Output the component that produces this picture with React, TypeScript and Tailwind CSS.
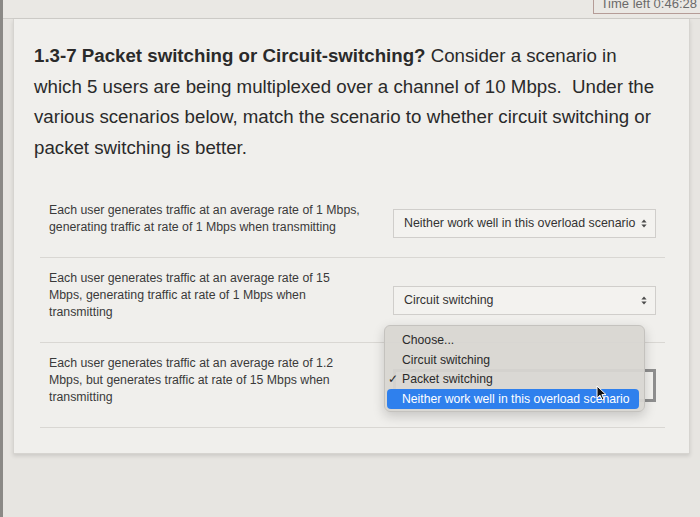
import React from 'react';

const rows = [
  {
    text: 'Each user generates traffic at an average rate of 1 Mbps, generating traffic at rate of 1 Mbps when transmitting',
    value: 'Neither work well in this overload scenario',
  },
  {
    text: 'Each user generates traffic at an average rate of 15 Mbps, generating traffic at rate of 1 Mbps when transmitting',
    value: 'Circuit switching',
  },
  {
    text: 'Each user generates traffic at an average rate of 1.2 Mbps, but generates traffic at rate of 15 Mbps when transmitting',
    value: '',
    open: true,
  },
];

const options = ['Choose...', 'Circuit switching', 'Packet switching', 'Neither work well in this overload scenario'];

const UpDown = () => (
  <svg width="6" height="9" viewBox="0 0 6 9" className="shrink-0">
    <path d="M3 0.5 L5.6 3.6 H0.4 Z" fill="#4a4a4a" />
    <path d="M3 8.5 L5.6 5.4 H0.4 Z" fill="#4a4a4a" />
  </svg>
);

const Cursor = () => (
  <svg width="11" height="16" viewBox="0 0 11 16" className="absolute left-[211px] top-[59px]">
    <path d="M1 1 L1 13 L4 10.2 L6.2 15 L8 14.2 L5.9 9.6 L10 9.6 Z" fill="#111" stroke="#fff" strokeWidth="1" strokeLinejoin="round" />
  </svg>
);

const Dropdown = () => (
  <div className="absolute left-[-12px] top-[-47px] w-[261px] rounded-[6px] border border-[#c4c2be] bg-[#d8d6d2]/95 pt-[5px] pb-[2px] shadow-[0_4px_12px_rgba(0,0,0,0.18)] z-10">
    {options.map((o, i) => {
      const hi = i === 3;
      return (
        <div
          key={o}
          className={
            hi
              ? 'relative mx-[2px] mr-[5px] h-[19.5px] rounded-[4px] bg-[#2f80ed] pl-[15px] flex items-center text-[12.2px] text-white'
              : 'relative mx-[2px] h-[19.5px] pl-[15px] flex items-center text-[12.2px] text-[#2a2a2a]'
          }
        >
          {i === 2 && <span className="absolute left-[1px] text-[12px]">✓</span>}
          {o}
        </div>
      );
    })}
    <Cursor />
  </div>
);

const App = () => {
  return (
    <div className="relative w-[700px] h-[517px] overflow-hidden bg-[#e7e5e1] border-l-[3px] border-[#8b8986] font-['Liberation_Sans',Arial,sans-serif]">
      <div className="h-[19px] bg-[#eae8e4] border-b border-[#cfcdc9] flex justify-end">
        <div className="mt-[-7px] mr-[-8px] h-[21px] border border-[#b59c97] pl-[7px] pr-[10px] text-[13px] leading-[19px] text-[#6a6a6a] whitespace-nowrap">
          Time left 0:46:28
        </div>
      </div>

      <div className="ml-[10px] mr-[10px] bg-[#f0efec] border-x border-b border-[#d6d4d0] shadow-[0_2px_4px_rgba(0,0,0,0.12)] pt-[22px] pl-[20px] pr-[20px] pb-[25px]">
        <p className="w-[630px] text-[18.7px] leading-[30.5px] text-[#2a2a2a]">
          <span className="font-bold">1.3-7 Packet switching or Circuit-switching?</span> Consider a scenario in which 5 users are being multiplexed over a channel of 10 Mbps.&nbsp; Under the various scenarios below, match the scenario to whether circuit switching or packet switching is better.
        </p>

        <div className="mt-[27px] ml-[6px] mr-[4px]">
          {rows.map((r, i) => (
            <div key={i} className="flex justify-between border-b border-[#d9d7d3] px-[9px]">
              <div className="w-[314px] pt-[12px] pb-[21px] text-[12.3px] leading-[17px] text-[#3a3a3a]">{r.text}</div>
              {r.open ? (
                <div className="relative self-center w-[263px] h-[33px] border-[3px] border-[#8f8f8f] bg-[#f3f2ef]">
                  <Dropdown />
                </div>
              ) : (
                <div className="self-center w-[263px] h-[29px] border border-[#d0cecb] bg-[#f3f2ef] pl-[10px] pr-[8px] flex items-center justify-between text-[12.4px] text-[#333]">
                  <span>{r.value}</span>
                  <UpDown />
                </div>
              )}
            </div>
          ))}
        </div>
      </div>
    </div>
  );
};

export default App;
